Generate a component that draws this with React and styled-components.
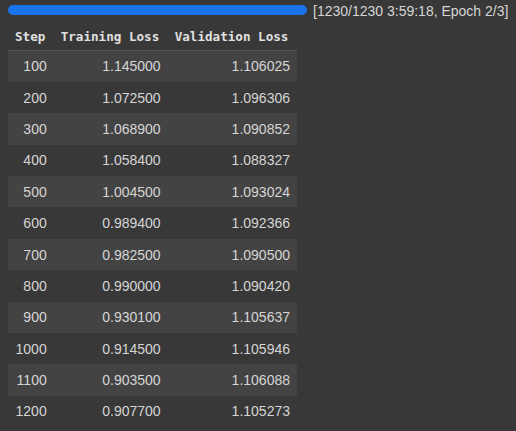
import React from "react";
import styled, { createGlobalStyle } from "styled-components";

const GlobalStyle = createGlobalStyle`
  html, body {
    margin: 0;
    padding: 0;
    background: #383838;
  }
  body {
    font-family: "Liberation Sans", Arial, sans-serif;
    color: #d5d5d5;
  }
`;

const Output = styled.div`
  padding: 0 8px;
  width: 516px;
  height: 431px;
  box-sizing: border-box;
  overflow: hidden;
`;

const ProgressLine = styled.div`
  display: flex;
  align-items: center;
  height: 20px;
  white-space: nowrap;
`;

const Bar = styled.div`
  flex: 0 0 299px;
  height: 10px;
  border-radius: 5px;
  background: #1a73e8;
`;

const ProgressText = styled.span`
  flex: 0 0 auto;
  margin-left: 6px;
  font-family: "Liberation Sans", Arial, sans-serif;
  font-size: 14px;
  color: #d5d5d5;
  position: relative;
  top: 1px;
`;

const Table = styled.table`
  margin-top: 2px;
  border-collapse: collapse;
  border-spacing: 0;
  width: 289px;
`;

const Head = styled.th`
  font-family: "DejaVu Sans Mono", "Liberation Mono", monospace;
  font-weight: bold;
  font-size: 12.6px;
  color: #e0e0e0;
  text-align: left;
  white-space: nowrap;
  height: 28px;
  padding: 0 7px;
  border-bottom: 1px solid #545454;
`;

const Row = styled.tr`
  background: ${(p) => (p.$odd ? "#434343" : "transparent")};
`;

const Cell = styled.td`
  font-family: "Liberation Sans", Arial, sans-serif;
  font-size: 14px;
  text-align: right;
  height: 31.4px;
  padding: 0 7px;
  box-sizing: border-box;
`;

const rows = [
  [100, "1.145000", "1.106025"],
  [200, "1.072500", "1.096306"],
  [300, "1.068900", "1.090852"],
  [400, "1.058400", "1.088327"],
  [500, "1.004500", "1.093024"],
  [600, "0.989400", "1.092366"],
  [700, "0.982500", "1.090500"],
  [800, "0.990000", "1.090420"],
  [900, "0.930100", "1.105637"],
  [1000, "0.914500", "1.105946"],
  [1100, "0.903500", "1.106088"],
  [1200, "0.907700", "1.105273"],
];

export default function App() {
  return (
    <Output>
      <GlobalStyle />
      <ProgressLine>
        <Bar />
        <ProgressText>[1230/1230 3:59:18, Epoch 2/3]</ProgressText>
      </ProgressLine>
      <Table>
        <thead>
          <tr>
            <Head>Step</Head>
            <Head>Training Loss</Head>
            <Head>Validation Loss</Head>
          </tr>
        </thead>
        <tbody>
          {rows.map((r, i) => (
            <Row key={r[0]} $odd={i % 2 === 0}>
              <Cell>{r[0]}</Cell>
              <Cell>{r[1]}</Cell>
              <Cell>{r[2]}</Cell>
            </Row>
          ))}
        </tbody>
      </Table>
    </Output>
  );
}
